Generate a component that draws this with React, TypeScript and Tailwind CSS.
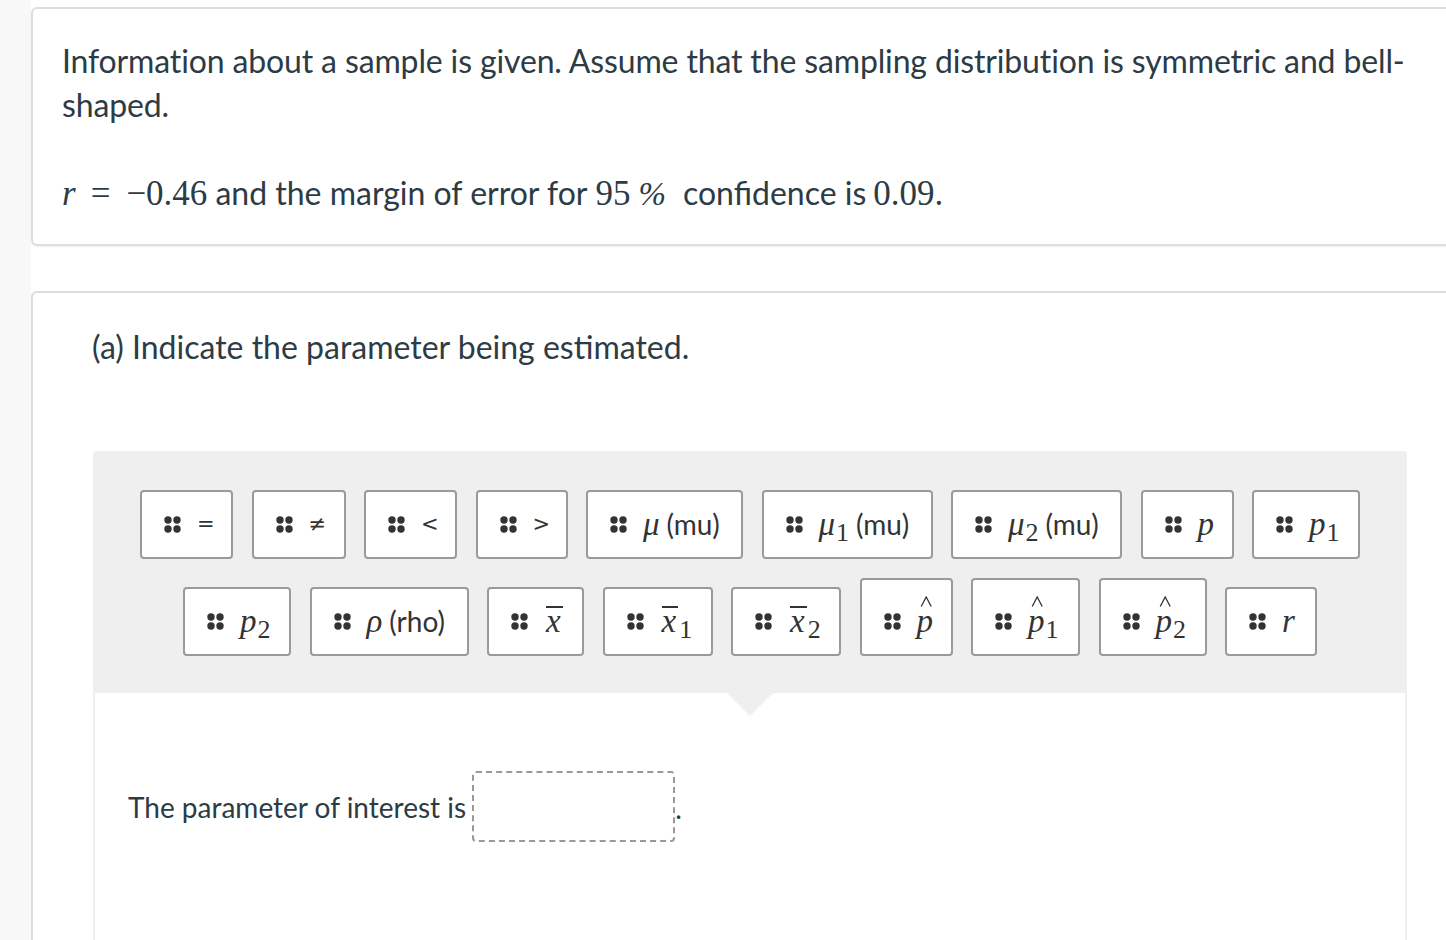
import React from "react";

const Dots = () => (
  <svg width="17" height="17" viewBox="0 0 17 17" className="shrink-0">
    <circle cx="4" cy="4" r="3.7" fill="#333" />
    <circle cx="13" cy="4" r="3.7" fill="#333" />
    <circle cx="4" cy="13" r="3.7" fill="#333" />
    <circle cx="13" cy="13" r="3.7" fill="#333" />
  </svg>
);

const serif = "font-['Liberation_Serif','DejaVu_Serif',serif]";

const I = ({ children }: { children: React.ReactNode }) => (
  <span className={`${serif} italic text-[33px] leading-none`}>{children}</span>
);
const Sub = ({ children }: { children: React.ReactNode }) => (
  <span className={`${serif} text-[26px] leading-none relative top-[6px] ml-[1px]`}>{children}</span>
);
const Mu = ({ sub }: { sub?: string }) => (
  <span className="inline-flex items-baseline">
    <I>μ</I>
    {sub && <Sub>{sub}</Sub>}
    <span className="ml-[7px] text-[28px] leading-none">(mu)</span>
  </span>
);
const P = ({ sub }: { sub?: string }) => (
  <span className="inline-flex items-baseline">
    <I>p</I>
    {sub && <Sub>{sub}</Sub>}
  </span>
);
const Bar = ({ sub }: { sub?: string }) => (
  <span className="inline-flex items-baseline">
    <span className="relative inline-block px-[2px]">
      <span className="absolute left-[2px] right-0 top-[1px] h-[1.5px] bg-[#333]" />
      <I>x</I>
    </span>
    {sub && <Sub>{sub}</Sub>}
  </span>
);
const Hat = ({ sub }: { sub?: string }) => (
  <span className="inline-flex items-baseline">
    <span className="relative inline-block">
      <svg
        width="12"
        height="11"
        viewBox="0 0 12 11"
        className="absolute left-1/2 -translate-x-[40%] -top-[9px]"
      >
        <path d="M1 10.5 L6 1 L11 10.5" fill="none" stroke="#333" strokeWidth="1.3" />
      </svg>
      <I>p</I>
    </span>
    {sub && <Sub>{sub}</Sub>}
  </span>
);

const Btn = ({ children, tall, w }: { children: React.ReactNode; tall?: boolean; w: string }) => (
  <div
    className={`${w} shrink-0 flex items-center gap-[16px] bg-white border-2 border-[#9a9a9a] rounded-[4px] pl-[22px] ${
      tall ? "h-[78px] pt-[9px]" : "h-[69px]"
    }`}
  >
    <Dots />
    <div className="flex items-center text-[#333] whitespace-nowrap">{children}</div>
  </div>
);

const Op = ({ children }: { children: React.ReactNode }) => (
  <span className="text-[21px] leading-none font-['DejaVu_Sans',sans-serif] text-[#333]">{children}</span>
);

export default function App() {
  return (
    <div className="w-[1446px] h-[940px] overflow-hidden flex bg-white font-['Lato','Noto_Sans',sans-serif] text-[#2d3b45]">
      <div className="w-[31px] shrink-0 bg-[#f8f8f8]" />
      <div className="flex-1 flex flex-col pt-[7px]">
        {/* Card 1 */}
        <div className="border-2 border-r-0 border-[#dddddd] rounded-l-[6px] pl-[29px] pt-[30px] pb-[28px] shadow-[0_1px_2px_rgba(0,0,0,0.06)]">
          <p className="text-[32px] leading-[44px] whitespace-nowrap tracking-[-0.14px]">
            Information about a sample is given. Assume that the sampling distribution is symmetric and bell-
            <br />
            shaped.
          </p>
          <p className="mt-[44px] text-[32px] leading-[44px] flex items-baseline whitespace-nowrap">
            <span className={`${serif} italic text-[35px]`}>r</span>
            <span className={`${serif} text-[35px] ml-[15px] mr-[16px]`}>=</span>
            <span className={`${serif} text-[35px]`}>−0.46</span>
            <span className="ml-[8px]">and the margin of error for</span>
            <span className={`${serif} text-[35px] ml-[8px]`}>95</span>
            <span className={`${serif} italic text-[33px] ml-[8px]`}>%</span>
            <span className="ml-[17px]">confidence is</span>
            <span className={`${serif} text-[35px] ml-[7px]`}>0.09.</span>
          </p>
        </div>

        {/* Card 2 */}
        <div className="mt-[45px] flex-1 border-2 border-r-0 border-b-0 border-[#dddddd] rounded-tl-[6px] pl-[60px] pr-[39px] pt-[32px] flex flex-col">
          <p className="text-[32px] leading-[44px] -ml-[1px] whitespace-nowrap">(a) Indicate the parameter being estimated.</p>

          <div className="mt-[82px] flex-1 flex flex-col border-2 border-[#efefef] rounded-t-[4px] border-b-0">
            <div className="relative bg-[#efefef] pt-[37px] pb-[37px] flex flex-col items-center">
              <div className="flex items-center gap-[18.5px]">
                <Btn w="w-[93px]"><Op>=</Op></Btn>
                <Btn w="w-[94px]"><Op>≠</Op></Btn>
                <Btn w="w-[93px]"><Op>&lt;</Op></Btn>
                <Btn w="w-[92px]"><Op>&gt;</Op></Btn>
                <Btn w="w-[157px]"><Mu /></Btn>
                <Btn w="w-[171px]"><Mu sub="1" /></Btn>
                <Btn w="w-[171px]"><Mu sub="2" /></Btn>
                <Btn w="w-[93px]"><P /></Btn>
                <Btn w="w-[108px]"><P sub="1" /></Btn>
              </div>
              <div className="mt-[19px] flex items-end gap-[18.5px]">
                <Btn w="w-[108px]"><P sub="2" /></Btn>
                <Btn w="w-[159px]">
                  <span className="inline-flex items-baseline">
                    <I>ρ</I>
                    <span className="ml-[7px] text-[28px] leading-none">(rho)</span>
                  </span>
                </Btn>
                <Btn w="w-[97px]"><Bar /></Btn>
                <Btn w="w-[110px]"><Bar sub="1" /></Btn>
                <Btn w="w-[110px]"><Bar sub="2" /></Btn>
                <Btn w="w-[93px]" tall><Hat /></Btn>
                <Btn w="w-[109px]" tall><Hat sub="1" /></Btn>
                <Btn w="w-[108px]" tall><Hat sub="2" /></Btn>
                <Btn w="w-[92px]"><I>r</I></Btn>
              </div>
              <div className="absolute left-[632px] -bottom-[23px] w-0 h-0 border-l-[23px] border-r-[23px] border-t-[23px] border-l-transparent border-r-transparent border-t-[#efefef]" />
            </div>
            <div className="pl-[33px] pt-[78px] flex items-center text-[28px]">
              <span>The parameter of interest is</span>
              <span className="ml-[6px] w-[203px] h-[71px] border-2 border-dashed border-[#999] rounded-[4px]" />
              <span className="self-center mt-[2px]">.</span>
            </div>
          </div>
        </div>
      </div>
    </div>
  );
}
